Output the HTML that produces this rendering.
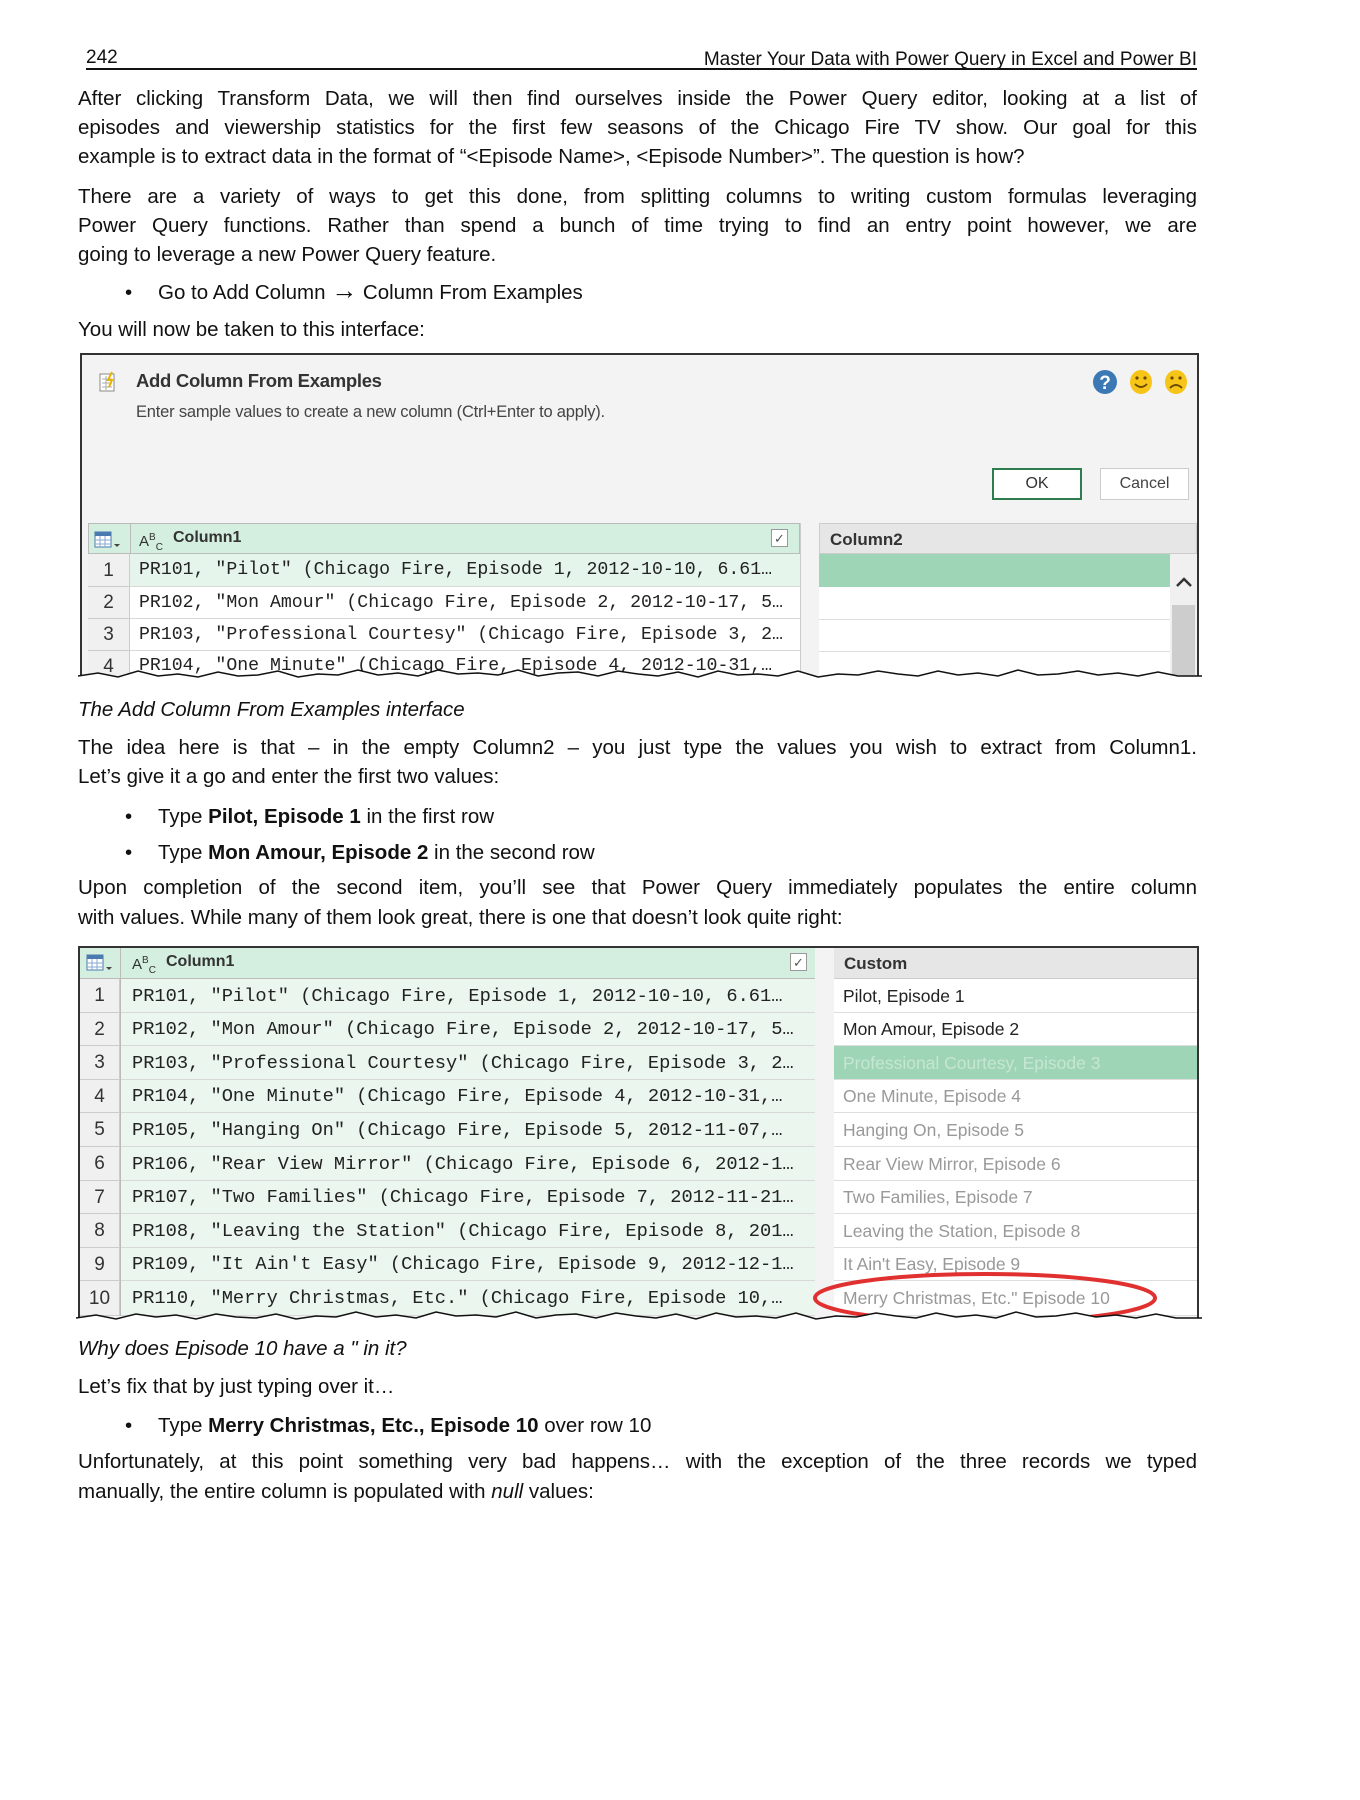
<!DOCTYPE html>
<html><head><meta charset="utf-8"><style>
*{margin:0;padding:0;box-sizing:border-box}
body{width:1360px;height:1800px;background:#fff;position:relative;overflow:hidden;font-family:"Liberation Sans",sans-serif;color:#111}
.a{position:absolute}
.ln{position:absolute;left:78px;width:1119px;font-size:20.5px;line-height:28px;white-space:nowrap}
.j{text-align:justify;text-align-last:justify}
.bul{position:absolute;left:125px;font-size:20.5px;line-height:28px;white-space:nowrap}
.bul span.t{position:absolute;left:33px}
.mono{font-family:"Liberation Mono",monospace;white-space:nowrap;color:#222;overflow:hidden}
.cell{position:absolute;border-bottom:1px solid #d8d8d8}
.num{position:absolute;background:#f0f0f0;border-right:1px solid #ccc;border-bottom:1px solid #ccc;text-align:center;color:#333;font-size:19px}
.cus{position:absolute;font-size:17.5px;white-space:nowrap;padding-left:9px;border-bottom:1px solid #ddd;background:#fff}
</style></head><body>

<div class="a" style="left:86px;top:47px;font-size:19px">242</div>
<div class="a" style="right:163px;top:49px;font-size:19px">Master Your Data with Power Query in Excel and Power BI</div>
<div class="a" style="left:86px;top:68px;width:1111px;height:2px;background:#111"></div>

<div class="ln j" style="top:85px">After clicking Transform Data, we will then find ourselves inside the Power Query editor, looking at a list of</div>
<div class="ln j" style="top:114px">episodes and viewership statistics for the first few seasons of the Chicago Fire TV show. Our goal for this</div>
<div class="ln" style="top:143px">example is to extract data in the format of “&lt;Episode Name&gt;, &lt;Episode Number&gt;”. The question is how?</div>
<div class="ln j" style="top:183px">There are a variety of ways to get this done, from splitting columns to writing custom formulas leveraging</div>
<div class="ln j" style="top:212px">Power Query functions. Rather than spend a bunch of time trying to find an entry point however, we are</div>
<div class="ln" style="top:241px">going to leverage a new Power Query feature.</div>
<div class="bul" style="top:279px">•<span class="t">Go to Add Column <span style="font-size:26px;line-height:20px">→</span> Column From Examples</span></div>
<div class="ln" style="top:316px">You will now be taken to this interface:</div>

<!-- Screenshot 1 -->
<div class="a" style="left:80px;top:353px;width:1119px;height:329px;background:#f3f3f3;border:2px solid #333;border-bottom:none;overflow:hidden"></div>
<svg class="a" style="left:98px;top:371px" width="20" height="22" viewBox="0 0 20 22"><rect x="2" y="3" width="14" height="17" fill="#fff" stroke="#888"/><path d="M4 8h10M4 12h10M4 16h10M8 5v14" stroke="#aaa"/><path d="M14 1l-4 8h4l-3 7" stroke="#e8b400" stroke-width="2" fill="none"/></svg>
<div class="a" style="left:136px;top:370px;font-size:18.5px;font-weight:bold;color:#333;letter-spacing:-0.3px">Add Column From Examples</div>
<div class="a" style="left:136px;top:403px;font-size:16.5px;color:#444;letter-spacing:-0.2px">Enter sample values to create a new column (Ctrl+Enter to apply).</div>
<svg class="a" style="left:1091px;top:368px" width="100" height="28"><circle cx="14" cy="14" r="12" fill="#3c78b4"/><text x="14" y="21" font-size="19" font-weight="bold" fill="#fff" text-anchor="middle" font-family="Liberation Sans">?</text>
<ellipse cx="50" cy="14" rx="11" ry="12" fill="#f6c518"/><circle cx="46" cy="10" r="1.6" fill="#6a4a00"/><circle cx="54" cy="10" r="1.6" fill="#6a4a00"/><path d="M44 16q6 6 12 0" stroke="#6a4a00" stroke-width="1.8" fill="none"/>
<ellipse cx="85" cy="14" rx="11" ry="12" fill="#f6c518"/><circle cx="81" cy="10" r="1.6" fill="#6a4a00"/><circle cx="89" cy="10" r="1.6" fill="#6a4a00"/><path d="M79 20q6 -6 12 0" stroke="#6a4a00" stroke-width="1.8" fill="none"/></svg>
<div class="a" style="left:992px;top:468px;width:90px;height:32px;border:2px solid #2e7d4f;background:#fff;text-align:center;line-height:28px;font-size:16px;color:#333">OK</div>
<div class="a" style="left:1100px;top:468px;width:89px;height:32px;border:1px solid #ccc;background:#fff;text-align:center;line-height:30px;font-size:16px;color:#444">Cancel</div>

<div class="a" style="left:88px;top:523px;width:712px;height:31px;background:#d4eedf;border:1px solid #bbb"></div>
<svg class="a" style="left:94px;top:529px" width="36" height="22"><rect x="1" y="3" width="16" height="15" fill="#fff" stroke="#4a7ab0"/><rect x="1" y="3" width="16" height="4" fill="#4a7ab0"/><path d="M1 11h16M1 15h16M6 7v11M11 7v11" stroke="#8aaad0"/><path d="M20 15l3 3 3-3z" fill="#444"/></svg>
<div class="a" style="left:130px;top:523px;width:1px;height:31px;background:#bbb"></div>
<div class="a" style="left:139px;top:527px;font-size:15px;color:#333;line-height:22px">A<sup style="font-size:10px">B</sup><sub style="font-size:10px">C</sub></div>
<div class="a" style="left:173px;top:529px;font-size:16px;font-weight:bold;color:#333">Column1</div>
<div class="a" style="left:771px;top:529px;width:17px;height:18px;border:1px solid #999;background:#fff;font-size:13px;text-align:center;line-height:17px;color:#555">✓</div>
<div class="a" style="left:819px;top:523px;width:378px;height:31px;background:#e6e6e6;border:1px solid #ccc;font-size:17px;font-weight:bold;color:#333;padding:6px 0 0 10px">Column2</div>

<div class="num" style="left:88px;top:554px;width:42px;height:33px;line-height:33px">1</div>
<div class="num" style="left:88px;top:587px;width:42px;height:32px;line-height:32px">2</div>
<div class="num" style="left:88px;top:619px;width:42px;height:32px;line-height:32px">3</div>
<div class="num" style="left:88px;top:651px;width:42px;height:31px;line-height:31px">4</div>
<div class="cell mono" style="left:130px;top:554px;width:670px;height:33px;line-height:33px;padding-left:9px;font-size:18.2px;background:#e6f5ec">PR101, "Pilot" (Chicago Fire, Episode 1, 2012-10-10, 6.61…</div>
<div class="cell mono" style="left:130px;top:587px;width:670px;height:32px;line-height:32px;padding-left:9px;font-size:18.2px;background:#fff">PR102, "Mon Amour" (Chicago Fire, Episode 2, 2012-10-17, 5…</div>
<div class="cell mono" style="left:130px;top:619px;width:670px;height:32px;line-height:32px;padding-left:9px;font-size:18.2px;background:#fff">PR103, "Professional Courtesy" (Chicago Fire, Episode 3, 2…</div>
<div class="cell mono" style="left:130px;top:651px;width:670px;height:31px;line-height:31px;padding-left:9px;font-size:18.2px;background:#fff">PR104, "One Minute" (Chicago Fire, Episode 4, 2012-10-31,…</div>
<div class="a" style="left:800px;top:523px;width:1px;height:159px;background:#ccc"></div>
<div class="a" style="left:819px;top:554px;width:351px;height:33px;background:#9fd5b7"></div>
<div class="a" style="left:819px;top:587px;width:351px;height:95px;background:#fff"></div>
<div class="a" style="left:819px;top:619px;width:351px;height:1px;background:#ddd"></div>
<div class="a" style="left:819px;top:651px;width:351px;height:1px;background:#ddd"></div>
<div class="a" style="left:1170px;top:554px;width:27px;height:128px;background:#f0f0f0"></div>
<div class="a" style="left:1172px;top:605px;width:23px;height:77px;background:#cdcdcd"></div>
<svg class="a" style="left:1174px;top:575px" width="20" height="14"><path d="M3 11l7-7 7 7" stroke="#333" stroke-width="2.5" fill="none"/></svg>
<svg class="a" style="left:78px;top:664px" width="1124" height="26">
<path d="M0 12 l20 -3 20 4 20 -6 20 5 20 -2 20 3 20 -5 20 4 20 -1 20 -4 20 6 20 -3 20 1 20 -5 20 5 20 -2 20 3 20 -6 20 4 20 -1 20 2 20 -5 20 6 20 -3 20 -1 20 4 20 -5 20 3 20 2 20 -4 20 5 20 -6 20 4 20 -1 20 2 20 -5 20 6 20 -3 20 1 20 -4 20 3 20 2 20 -5 20 4 20 -2 20 3 20 -6 20 5 20 -1 20 -3 20 4 20 -2 20 3 20 -4 20 4 L1124 12 V26 H0Z" fill="#fff"/>
<path d="M0 12 l20 -3 20 4 20 -6 20 5 20 -2 20 3 20 -5 20 4 20 -1 20 -4 20 6 20 -3 20 1 20 -5 20 5 20 -2 20 3 20 -6 20 4 20 -1 20 2 20 -5 20 6 20 -3 20 -1 20 4 20 -5 20 3 20 2 20 -4 20 5 20 -6 20 4 20 -1 20 2 20 -5 20 6 20 -3 20 1 20 -4 20 3 20 2 20 -5 20 4 20 -2 20 3 20 -6 20 5 20 -1 20 -3 20 4 20 -2 20 3 20 -4 20 4 L1124 12" fill="none" stroke="#111" stroke-width="1.5"/></svg>

<div class="ln" style="top:696px;font-style:italic">The Add Column From Examples interface</div>
<div class="ln j" style="top:734px">The idea here is that – in the empty Column2 – you just type the values you wish to extract from Column1.</div>
<div class="ln" style="top:763px">Let’s give it a go and enter the first two values:</div>
<div class="bul" style="top:803px">•<span class="t">Type <b>Pilot, Episode 1</b> in the first row</span></div>
<div class="bul" style="top:839px">•<span class="t">Type <b>Mon Amour, Episode 2</b> in the second row</span></div>
<div class="ln j" style="top:874px">Upon completion of the second item, you’ll see that Power Query immediately populates the entire column</div>
<div class="ln" style="top:904px">with values. While many of them look great, there is one that doesn’t look quite right:</div>

<!-- Screenshot 2 -->
<div class="a" style="left:78px;top:946px;width:1121px;height:382px;background:#f3f3f3;border:2px solid #333;border-bottom:none"></div>
<div class="a" style="left:80px;top:948px;width:735px;height:31px;background:#d4eedf;border-bottom:1px solid #bbb"></div>
<svg class="a" style="left:86px;top:952px" width="36" height="22"><rect x="1" y="3" width="16" height="15" fill="#fff" stroke="#4a7ab0"/><rect x="1" y="3" width="16" height="4" fill="#4a7ab0"/><path d="M1 11h16M1 15h16M6 7v11M11 7v11" stroke="#8aaad0"/><path d="M20 15l3 3 3-3z" fill="#444"/></svg>
<div class="a" style="left:120px;top:948px;width:1px;height:368px;background:#bbb"></div>
<div class="a" style="left:132px;top:950px;font-size:15px;color:#333;line-height:22px">A<sup style="font-size:10px">B</sup><sub style="font-size:10px">C</sub></div>
<div class="a" style="left:166px;top:953px;font-size:16px;font-weight:bold;color:#333">Column1</div>
<div class="a" style="left:790px;top:953px;width:17px;height:18px;border:1px solid #999;background:#fff;font-size:13px;text-align:center;line-height:17px;color:#555">✓</div>
<div class="a" style="left:815px;top:948px;width:19px;height:368px;background:#f3f3f3"></div>
<div class="a" style="left:834px;top:948px;width:363px;height:31px;background:#e6e6e6;border-bottom:1px solid #ccc;font-size:17px;font-weight:bold;color:#333;padding:6px 0 0 10px">Custom</div>

<div class="num" style="left:80px;top:979px;width:40px;height:34px;line-height:34px">1</div>
<div class="num" style="left:80px;top:1013px;width:40px;height:33px;line-height:33px">2</div>
<div class="num" style="left:80px;top:1046px;width:40px;height:34px;line-height:34px">3</div>
<div class="num" style="left:80px;top:1080px;width:40px;height:33px;line-height:33px">4</div>
<div class="num" style="left:80px;top:1113px;width:40px;height:34px;line-height:34px">5</div>
<div class="num" style="left:80px;top:1147px;width:40px;height:34px;line-height:34px">6</div>
<div class="num" style="left:80px;top:1181px;width:40px;height:33px;line-height:33px">7</div>
<div class="num" style="left:80px;top:1214px;width:40px;height:34px;line-height:34px">8</div>
<div class="num" style="left:80px;top:1248px;width:40px;height:33px;line-height:33px">9</div>
<div class="num" style="left:80px;top:1281px;width:40px;height:35px;line-height:35px">10</div>

<div class="cell mono" style="left:121px;top:979px;width:694px;height:34px;line-height:34px;padding-left:11px;font-size:18.7px;background:#eaf6ee">PR101, "Pilot" (Chicago Fire, Episode 1, 2012-10-10, 6.61…</div>
<div class="cell mono" style="left:121px;top:1013px;width:694px;height:33px;line-height:33px;padding-left:11px;font-size:18.7px;background:#eaf6ee">PR102, "Mon Amour" (Chicago Fire, Episode 2, 2012-10-17, 5…</div>
<div class="cell mono" style="left:121px;top:1046px;width:694px;height:34px;line-height:34px;padding-left:11px;font-size:18.7px;background:#eaf6ee">PR103, "Professional Courtesy" (Chicago Fire, Episode 3, 2…</div>
<div class="cell mono" style="left:121px;top:1080px;width:694px;height:33px;line-height:33px;padding-left:11px;font-size:18.7px;background:#eaf6ee">PR104, "One Minute" (Chicago Fire, Episode 4, 2012-10-31,…</div>
<div class="cell mono" style="left:121px;top:1113px;width:694px;height:34px;line-height:34px;padding-left:11px;font-size:18.7px;background:#eaf6ee">PR105, "Hanging On" (Chicago Fire, Episode 5, 2012-11-07,…</div>
<div class="cell mono" style="left:121px;top:1147px;width:694px;height:34px;line-height:34px;padding-left:11px;font-size:18.7px;background:#eaf6ee">PR106, "Rear View Mirror" (Chicago Fire, Episode 6, 2012-1…</div>
<div class="cell mono" style="left:121px;top:1181px;width:694px;height:33px;line-height:33px;padding-left:11px;font-size:18.7px;background:#eaf6ee">PR107, "Two Families" (Chicago Fire, Episode 7, 2012-11-21…</div>
<div class="cell mono" style="left:121px;top:1214px;width:694px;height:34px;line-height:34px;padding-left:11px;font-size:18.7px;background:#eaf6ee">PR108, "Leaving the Station" (Chicago Fire, Episode 8, 201…</div>
<div class="cell mono" style="left:121px;top:1248px;width:694px;height:33px;line-height:33px;padding-left:11px;font-size:18.7px;background:#eaf6ee">PR109, "It Ain't Easy" (Chicago Fire, Episode 9, 2012-12-1…</div>
<div class="cell mono" style="left:121px;top:1281px;width:694px;height:35px;line-height:35px;padding-left:11px;font-size:18.7px;background:#eaf6ee">PR110, "Merry Christmas, Etc." (Chicago Fire, Episode 10,…</div>

<div class="cus" style="left:834px;top:979px;width:363px;height:34px;line-height:34px;color:#222">Pilot, Episode 1</div>
<div class="cus" style="left:834px;top:1013px;width:363px;height:33px;line-height:33px;color:#222">Mon Amour, Episode 2</div>
<div class="cus" style="left:834px;top:1046px;width:363px;height:34px;line-height:34px;color:#c6e6d2;background:#9fd5b7">Professional Courtesy, Episode 3</div>
<div class="cus" style="left:834px;top:1080px;width:363px;height:33px;line-height:33px;color:#999">One Minute, Episode 4</div>
<div class="cus" style="left:834px;top:1113px;width:363px;height:34px;line-height:34px;color:#999">Hanging On, Episode 5</div>
<div class="cus" style="left:834px;top:1147px;width:363px;height:34px;line-height:34px;color:#999">Rear View Mirror, Episode 6</div>
<div class="cus" style="left:834px;top:1181px;width:363px;height:33px;line-height:33px;color:#999">Two Families, Episode 7</div>
<div class="cus" style="left:834px;top:1214px;width:363px;height:34px;line-height:34px;color:#999">Leaving the Station, Episode 8</div>
<div class="cus" style="left:834px;top:1248px;width:363px;height:33px;line-height:33px;color:#999">It Ain't Easy, Episode 9</div>
<div class="cus" style="left:834px;top:1281px;width:363px;height:35px;line-height:35px;color:#999">Merry Christmas, Etc." Episode 10</div>
<svg class="a" style="left:800px;top:1260px" width="380" height="80"><ellipse cx="185" cy="38" rx="170" ry="24" fill="none" stroke="#e03030" stroke-width="4"/></svg>
<svg class="a" style="left:76px;top:1306px" width="1126" height="26">
<path d="M0 12 l20 -3 20 4 20 -5 20 3 20 -2 20 4 20 -5 20 3 20 1 20 -4 20 5 20 -3 20 1 20 -5 20 5 20 -2 20 3 20 -6 20 4 20 -1 20 2 20 -5 20 6 20 -3 20 -1 20 4 20 -5 20 3 20 2 20 -4 20 5 20 -6 20 4 20 -1 20 2 20 -5 20 6 20 -3 20 1 20 -4 20 3 20 2 20 -5 20 4 20 -2 20 3 20 -6 20 5 20 -1 20 -3 20 4 20 -2 20 3 20 -4 20 4 L1126 12 V26 H0Z" fill="#fff"/>
<path d="M0 12 l20 -3 20 4 20 -5 20 3 20 -2 20 4 20 -5 20 3 20 1 20 -4 20 5 20 -3 20 1 20 -5 20 5 20 -2 20 3 20 -6 20 4 20 -1 20 2 20 -5 20 6 20 -3 20 -1 20 4 20 -5 20 3 20 2 20 -4 20 5 20 -6 20 4 20 -1 20 2 20 -5 20 6 20 -3 20 1 20 -4 20 3 20 2 20 -5 20 4 20 -2 20 3 20 -6 20 5 20 -1 20 -3 20 4 20 -2 20 3 20 -4 20 4 L1126 12" fill="none" stroke="#111" stroke-width="1.5"/></svg>

<div class="ln" style="top:1335px;font-style:italic">Why does Episode 10 have a " in it?</div>
<div class="ln" style="top:1373px">Let’s fix that by just typing over it…</div>
<div class="bul" style="top:1412px">•<span class="t">Type <b>Merry Christmas, Etc., Episode 10</b> over row 10</span></div>
<div class="ln j" style="top:1448px">Unfortunately, at this point something very bad happens… with the exception of the three records we typed</div>
<div class="ln" style="top:1478px">manually, the entire column is populated with <i>null</i> values:</div>
</body></html>
